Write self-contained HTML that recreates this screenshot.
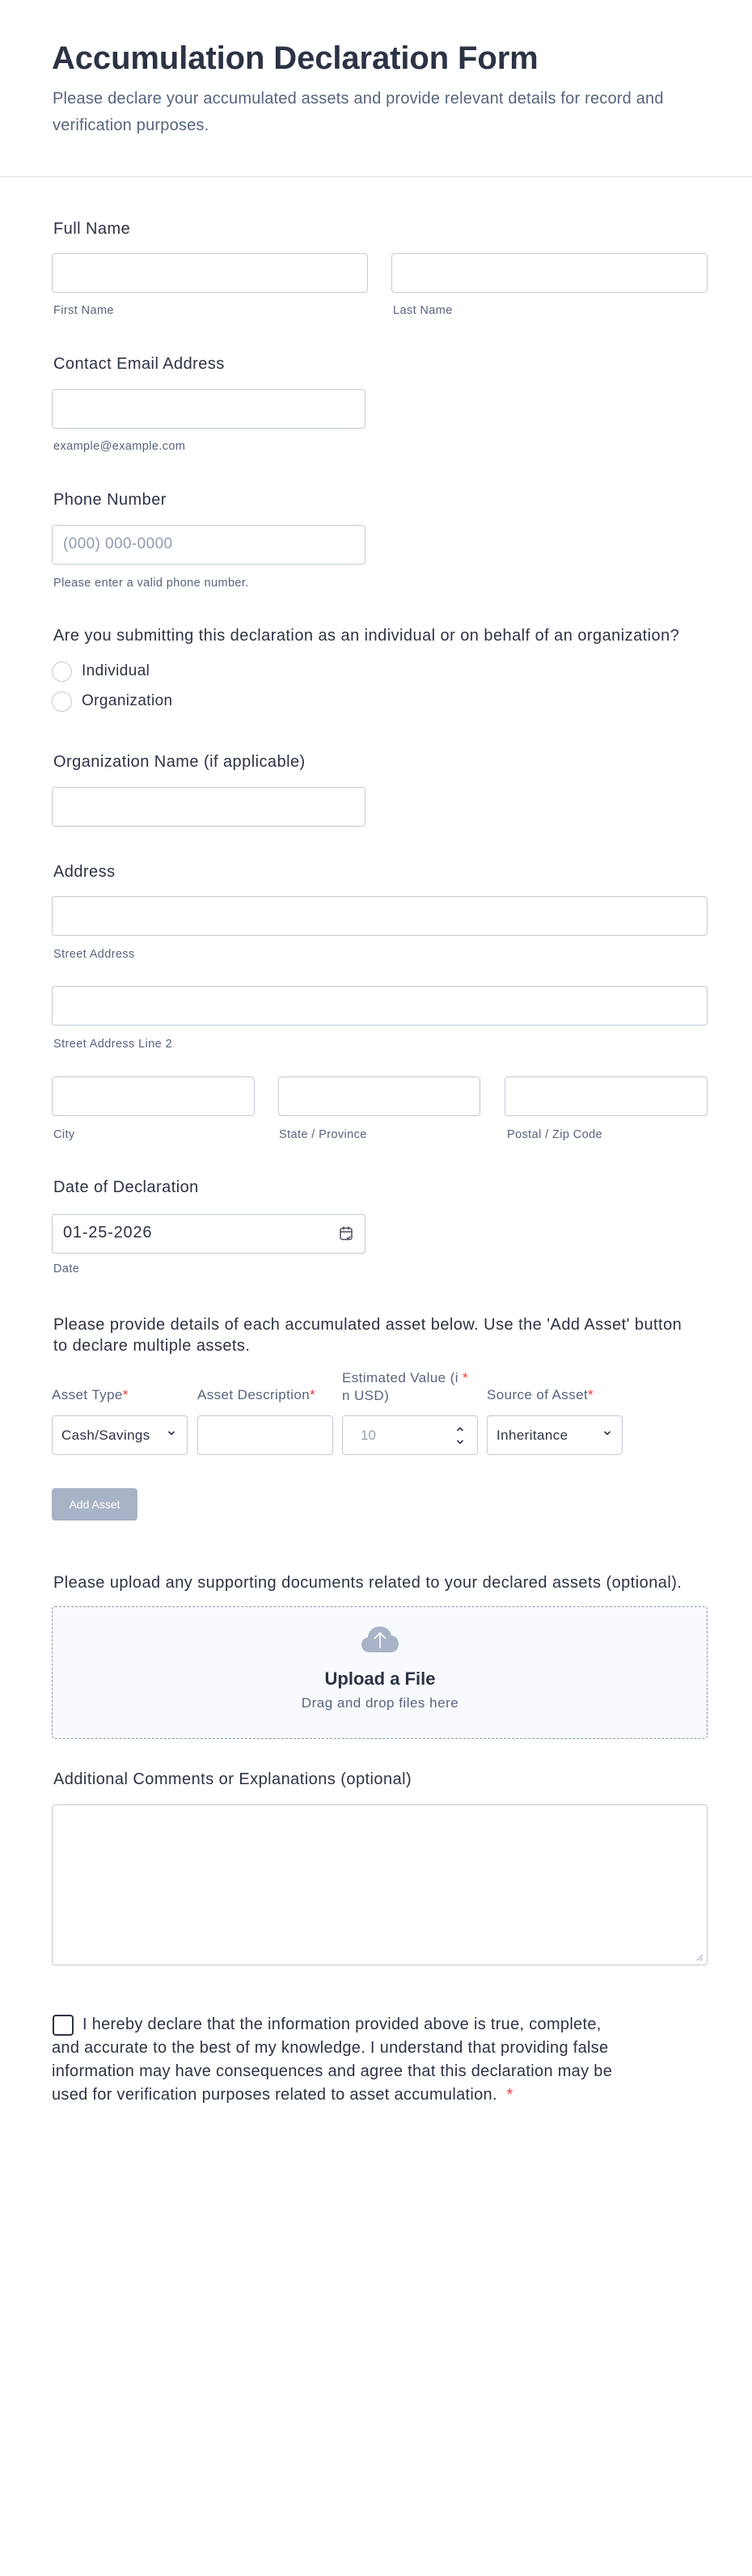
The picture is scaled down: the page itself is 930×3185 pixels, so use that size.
<!DOCTYPE html>
<html><head><meta charset="utf-8">
<style>
*{box-sizing:border-box;margin:0;padding:0}
html,body{width:930px;height:3185px;background:#fff;overflow:hidden}
body{position:relative;font-family:"Liberation Sans",sans-serif;color:#2c3345}
.a{position:absolute;white-space:nowrap}
.lbl{font-size:20px;letter-spacing:0.45px;color:#2c3345}
.sub{font-size:14.5px;letter-spacing:0.4px;color:#57647e}
.in{position:absolute;border:1px solid #c3cad8;border-radius:4px;background:#fff;height:49px}
.radio{position:absolute;width:25px;height:25px;border:1.5px solid #c3cad8;border-radius:50%;background:#fff}
.red{color:#f23a3c}
.col{font-size:17px;letter-spacing:0.4px;color:#57647e}
</style></head><body>
<div class="a" style="left:64px;top:50px;font-size:40px;font-weight:bold;color:#2c3345;letter-spacing:-0.1px">Accumulation Declaration Form</div>
<div class="a" style="left:65px;top:106px;font-size:20px;letter-spacing:0.2px;line-height:33px;color:#57647e">Please declare your accumulated assets and provide relevant details for record and<br>verification purposes.</div>
<div style="position:absolute;left:0;top:218px;width:930px;height:1px;background:#dcdfe6"></div>

<div class="a lbl" style="left:66px;top:272px">Full Name</div>
<div class="in" style="left:64px;top:313px;width:391px"></div>
<div class="in" style="left:484px;top:313px;width:391px"></div>
<div class="a sub" style="left:66px;top:376px">First Name</div>
<div class="a sub" style="left:486px;top:376px">Last Name</div>

<div class="a lbl" style="left:66px;top:439px">Contact Email Address</div>
<div class="in" style="left:64px;top:481px;width:388px"></div>
<div class="a sub" style="left:66px;top:544px">example@example.com</div>

<div class="a lbl" style="left:66px;top:607px">Phone Number</div>
<div class="in" style="left:64px;top:649px;width:388px"></div>
<div class="a" style="left:78px;top:662px;font-size:19px;letter-spacing:0.4px;color:#8f9bb3">(000) 000-0000</div>
<div class="a sub" style="left:66px;top:713px">Please enter a valid phone number.</div>

<div class="a lbl" style="left:66px;top:775px">Are you submitting this declaration as an individual or on behalf of an organization?</div>
<div class="radio" style="left:64px;top:818px"></div>
<div class="a" style="left:101px;top:819px;font-size:19px;letter-spacing:0.4px">Individual</div>
<div class="radio" style="left:64px;top:855px"></div>
<div class="a" style="left:101px;top:856px;font-size:19px;letter-spacing:0.4px">Organization</div>

<div class="a lbl" style="left:66px;top:931px">Organization Name (if applicable)</div>
<div class="in" style="left:64px;top:973px;width:388px"></div>

<div class="a lbl" style="left:66px;top:1067px">Address</div>
<div class="in" style="left:64px;top:1108px;width:811px"></div>
<div class="a sub" style="left:66px;top:1172px">Street Address</div>
<div class="in" style="left:64px;top:1219px;width:811px"></div>
<div class="a sub" style="left:66px;top:1283px">Street Address Line 2</div>
<div class="in" style="left:64px;top:1331px;width:251px"></div>
<div class="in" style="left:344px;top:1331px;width:250px"></div>
<div class="in" style="left:624px;top:1331px;width:251px"></div>
<div class="a sub" style="left:66px;top:1395px">City</div>
<div class="a sub" style="left:345px;top:1395px">State / Province</div>
<div class="a sub" style="left:627px;top:1395px">Postal / Zip Code</div>

<div class="a lbl" style="left:66px;top:1457px">Date of Declaration</div>
<div class="in" style="left:64px;top:1501px;width:388px"></div>
<div class="a" style="left:78px;top:1513px;font-size:20px;letter-spacing:0.8px">01-25-2026</div>
<svg class="a" style="left:419px;top:1515px" width="18" height="20" viewBox="0 0 18 20" fill="none" stroke="#4a4f60" stroke-width="1.5"><rect x="2" y="3.5" width="14" height="14" rx="2.5"/><path d="M2 8h14M6 1.5v4M12 1.5v4M10 15l1.5 1.5 3-3"/></svg>
<div class="a sub" style="left:66px;top:1561px">Date</div>

<div class="a lbl" style="left:66px;top:1625px;line-height:26px">Please provide details of each accumulated asset below. Use the 'Add Asset' button<br>to declare multiple assets.</div>
<div class="a col" style="left:64px;top:1715px">Asset Type<span class="red">*</span></div>
<div class="a col" style="left:244px;top:1715px">Asset Description<span class="red">*</span></div>
<div class="a col" style="left:423px;top:1693px;line-height:22px">Estimated Value (i <span class="red">*</span><br>n USD)</div>
<div class="a col" style="left:602px;top:1715px">Source of Asset<span class="red">*</span></div>
<div class="in" style="left:64px;top:1750px;width:168px"></div>
<div class="a" style="left:76px;top:1765px;font-size:17px;letter-spacing:0.4px">Cash/Savings</div>
<svg class="a" style="left:207px;top:1768px" width="10" height="8" viewBox="0 0 10 8" fill="none" stroke="#2c3345" stroke-width="1.6"><path d="M1.5 2l3.5 3.5 3.5-3.5"/></svg>
<div class="in" style="left:244px;top:1750px;width:168px"></div>
<div class="in" style="left:423px;top:1750px;width:168px"></div>
<div class="a" style="left:446px;top:1765px;font-size:17px;color:#9aa3b5">10</div>
<svg class="a" style="left:564px;top:1763px" width="10" height="24" viewBox="0 0 10 24" fill="none" stroke="#2c3345" stroke-width="1.6"><path d="M1.5 6l3.5-3.5 3.5 3.5M1.5 18l3.5 3.5 3.5-3.5"/></svg>
<div class="in" style="left:602px;top:1750px;width:168px"></div>
<div class="a" style="left:614px;top:1765px;font-size:17px;letter-spacing:0.4px">Inheritance</div>
<svg class="a" style="left:746px;top:1768px" width="10" height="8" viewBox="0 0 10 8" fill="none" stroke="#2c3345" stroke-width="1.6"><path d="M1.5 2l3.5 3.5 3.5-3.5"/></svg>
<div class="a" style="left:64px;top:1840px;width:106px;height:40px;background:#a9b3c7;border-radius:4px;color:#fff;font-size:14px;text-align:center;line-height:40px">Add Asset</div>

<div class="a lbl" style="left:66px;top:1946px">Please upload any supporting documents related to your declared assets (optional).</div>
<div style="position:absolute;left:64px;top:1986px;width:811px;height:164px;border:1.5px dashed #8e96a8;border-radius:4px;background:#f8fafd"></div>
<svg class="a" style="left:446px;top:2010px" width="48" height="34" viewBox="0 0 48 34"><path d="M12 33C5 33 1 29 1 23.5 1 18 5 15 9 14.5 9.5 6 16 1 24 1c7 0 12.5 4.5 14 11 5.5 0.5 9 5 9 10.5C47 28.5 43 33 37 33z" fill="#a9b3c7"/><path d="M24 28V9M17 16l7-7 7 7" fill="none" stroke="#fff" stroke-width="1.6"/></svg>
<div class="a" style="left:0;width:940px;text-align:center;top:2063px;font-size:22px;font-weight:bold;color:#2c3345">Upload a File</div>
<div class="a" style="left:0;width:940px;text-align:center;top:2096px;font-size:17px;letter-spacing:0.5px;color:#57647e">Drag and drop files here</div>

<div class="a lbl" style="left:66px;top:2189px">Additional Comments or Explanations (optional)</div>
<div class="in" style="left:64px;top:2231px;width:811px;height:199px"></div>
<svg class="a" style="left:861px;top:2416px" width="9" height="9" viewBox="0 0 9 9" stroke="#9aa3b5" stroke-width="1"><path d="M1 8L8 1M5 8L8 5"/></svg>

<div style="position:absolute;left:65px;top:2491px;width:26px;height:26px;border:2px solid #2c3345;border-radius:4px"></div>
<div class="a" style="left:64px;top:2489px;font-size:20px;letter-spacing:0.3px;line-height:29px;color:#2c3345"><span style="padding-left:38px"></span>I hereby declare that the information provided above is true, complete,<br>and accurate to the best of my knowledge. I understand that providing false<br>information may have consequences and agree that this declaration may be<br>used for verification purposes related to asset accumulation. <span class="red">&nbsp;*</span></div>
</body></html>
